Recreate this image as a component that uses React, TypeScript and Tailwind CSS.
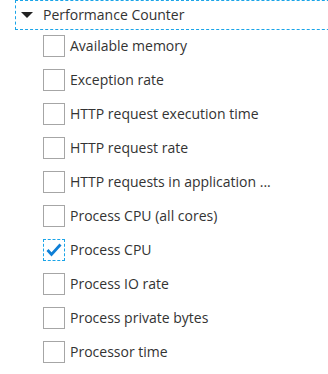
import React from 'react';

const counters = [
  { label: 'Available memory', checked: false },
  { label: 'Exception rate', checked: false },
  { label: 'HTTP request execution time', checked: false },
  { label: 'HTTP request rate', checked: false },
  { label: 'HTTP requests in application ...', checked: false },
  { label: 'Process CPU (all cores)', checked: false },
  { label: 'Process CPU', checked: true },
  { label: 'Process IO rate', checked: false },
  { label: 'Process private bytes', checked: false },
  { label: 'Processor time', checked: false },
];

export default function App() {
  return (
    <div className="w-[328px] h-[374px] bg-white overflow-hidden text-[#333333] text-[14px] font-['Open_Sans',sans-serif]">
      {/* Group header */}
      <div className="ml-[15px] w-[340px] h-[30px] border-t border-b border-l border-dashed border-[#1aa4e8] flex items-center">
        <svg className="ml-[5px] w-[12px] h-[7px]" viewBox="0 0 12 7">
          <path d="M0 0 L12 0 L6 6 Z" fill="#222222" />
        </svg>
        <span className="ml-[10px] leading-none">Performance Counter</span>
      </div>

      <div className="flex flex-col gap-[12px] pt-[5px] pl-[43px]">
        {counters.map((c) => (
          <div key={c.label} className="flex items-center gap-[5px] h-[22px]">
            {c.checked ? (
              <div className="w-[22px] h-[22px] border border-dashed border-[#1aa4e8] flex items-center justify-center">
                <svg className="w-[16px] h-[14px]" viewBox="0 0 16 14">
                  <path d="M1.5 7 L5.5 11.5 L14.5 1.5" fill="none" stroke="#0f7fd6" strokeWidth="2.8" />
                </svg>
              </div>
            ) : (
              <div className="w-[22px] h-[22px] border border-[#a6a6a6]" />
            )}
            <span className="leading-none whitespace-nowrap">{c.label}</span>
          </div>
        ))}
      </div>
    </div>
  );
}
